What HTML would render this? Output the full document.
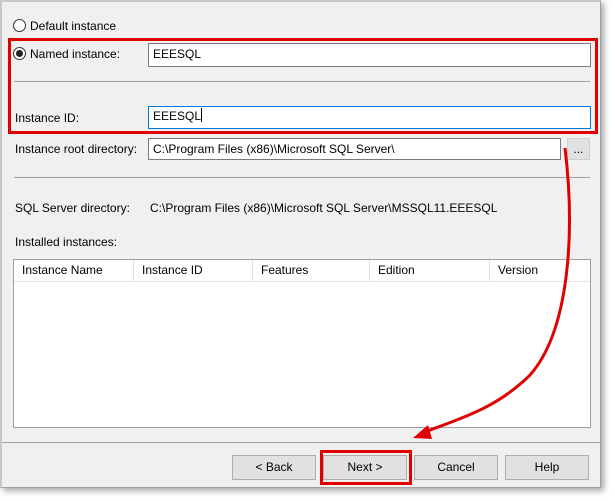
<!DOCTYPE html>
<html><head><meta charset="utf-8"><style>
*{box-sizing:border-box;margin:0;padding:0}
body{width:615px;height:501px;background:#fff;font-family:"Liberation Sans",sans-serif;font-size:12px;color:#000;position:relative;overflow:hidden}
.win{position:absolute;left:0;top:0;width:601px;height:488px;background:#f0f0f0;border-left:2px solid #c8c8c8;border-top:2px solid #c8c8c8;border-right:1px solid #a0a0a0;border-bottom:1px solid #a0a0a0;box-shadow:3px 3px 6px rgba(0,0,0,.35)}
.a{position:absolute}
.t{position:absolute;white-space:nowrap;line-height:14px}
.box{position:absolute;background:#fff;border:1px solid #7a7a7a;padding-left:4px;line-height:20px}
.sep{position:absolute;height:1px;background:#a0a0a0}
.btn{position:absolute;top:455px;width:84px;height:25px;background:#e1e1e1;border:1px solid #adadad;text-align:center;line-height:23px}
.radio{position:absolute;width:13px;height:13px;border:1px solid #333;border-radius:50%;background:#fff}
.th{position:absolute;top:0;height:21px;line-height:21px;padding-left:8px;border-right:1px solid #e0e0e0}
</style></head><body>
<div class="win"></div>
<div class="radio" style="left:13px;top:19px"></div>
<div class="t" style="left:30px;top:19px">Default instance</div>
<div class="radio" style="left:13px;top:47px"><div class="a" style="left:2px;top:2px;width:7px;height:7px;border-radius:50%;background:#222"></div></div>
<div class="t" style="left:30px;top:47px">Named instance:</div>
<div class="box" style="left:148px;top:43px;width:443px;height:24px">EEESQL</div>
<div class="sep" style="left:14px;top:81px;width:576px"></div>
<div class="t" style="left:15px;top:111px">Instance ID:</div>
<div class="box" style="left:148px;top:106px;width:443px;height:23px;border-color:#0078d7;line-height:19px">EEESQL<span style="display:inline-block;width:1px;height:14px;background:#000;vertical-align:-2px"></span></div>
<div class="t" style="left:15px;top:142px">Instance root directory:</div>
<div class="box" style="left:148px;top:138px;width:413px;height:22px;line-height:20px">C:\Program Files (x86)\Microsoft SQL Server\</div>
<div class="a" style="left:567px;top:138px;width:23px;height:22px;background:#e1e1e1;border:1px solid #cfcfcf;text-align:center;line-height:20px">...</div>
<div class="sep" style="left:14px;top:177px;width:576px"></div>
<div class="t" style="left:15px;top:201px">SQL Server directory:</div>
<div class="t" style="left:150px;top:201px">C:\Program Files (x86)\Microsoft SQL Server\MSSQL11.EEESQL</div>
<div class="t" style="left:15px;top:235px">Installed instances:</div>
<div class="a" style="left:13px;top:259px;width:578px;height:169px;background:#fff;border:1px solid #a0a0a0">
 <div class="a" style="left:0;top:0;width:576px;height:22px;border-bottom:1px solid #e5e5e5"></div>
 <div class="th" style="left:0;width:120px">Instance Name</div>
 <div class="th" style="left:120px;width:119px">Instance ID</div>
 <div class="th" style="left:239px;width:117px">Features</div>
 <div class="th" style="left:356px;width:120px">Edition</div>
 <div class="th" style="left:476px;width:100px;border-right:none">Version</div>
</div>
<div class="sep" style="left:2px;top:442px;width:598px"></div>
<div class="btn" style="left:232px">&lt; Back</div>
<div class="btn" style="left:323px">Next &gt;</div>
<div class="btn" style="left:414px">Cancel</div>
<div class="btn" style="left:505px">Help</div>
<svg class="a" style="left:0;top:0" width="615" height="501">
<rect x="9.5" y="39.5" width="587" height="93" fill="none" stroke="#e00000" stroke-width="3"/>
<rect x="321.5" y="451.5" width="89" height="32" fill="none" stroke="#e00000" stroke-width="3"/>
<path d="M565 148 C575 230 570 330 530 375 C495 410 455 420 425 432" fill="none" stroke="#e00000" stroke-width="3"/>
<polygon points="413,438 428,425 432,439" fill="#e00000"/>
</svg>
</body></html>
